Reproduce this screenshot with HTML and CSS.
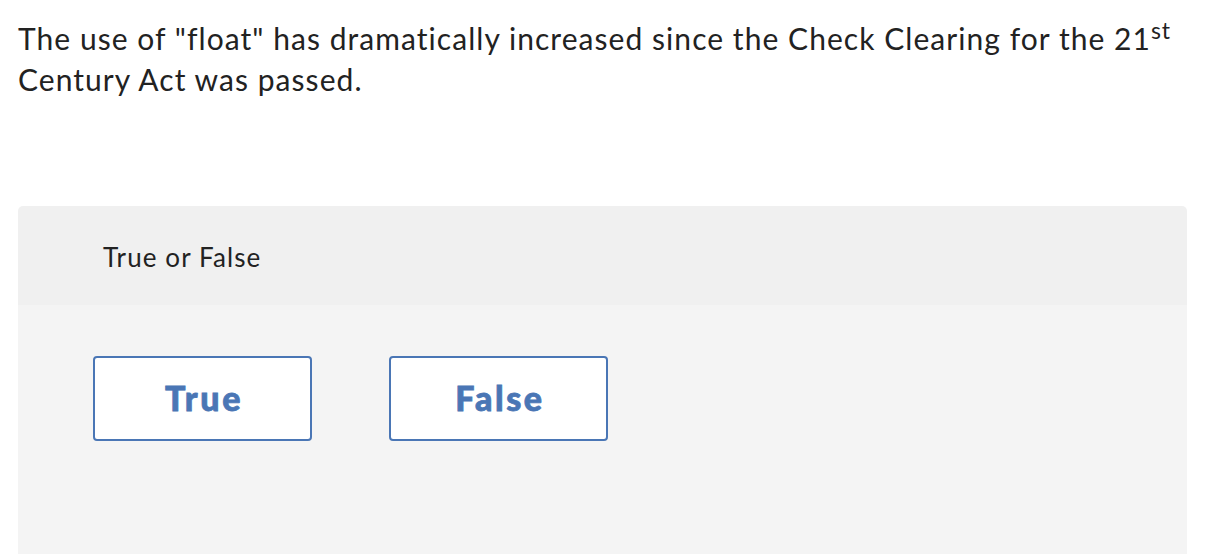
FILE: index.html
```html
<!DOCTYPE html>
<html>
<head>
<meta charset="utf-8">
<link rel="stylesheet" href="styles.css">
</head>
<body>
<div class="page">
  <p class="prompt">The use of "float" has dramatically increased since the Check Clearing for the 21<sup>st</sup> Century Act was passed.</p>
  <section class="card">
    <div class="card-head">True or False</div>
    <div class="card-body">
      <button class="choice">True</button>
      <button class="choice">False</button>
    </div>
  </section>
</div>
</body>
</html>
```
FILE: styles.css
```css
html, body {
  margin: 0;
  padding: 0;
  background: #ffffff;
}
.page {
  padding: 18px 33px 0 18px;
  font-family: Lato, "Noto Sans", sans-serif;
  color: #222222;
}
.prompt {
  margin: 0;
  font-size: 30px;
  line-height: 41px;
  letter-spacing: 1.05px;
}
.prompt sup {
  font-size: 23px;
  line-height: 0;
  vertical-align: 0.5em;
  letter-spacing: 0.8px;
}
.card {
  margin-top: 106px;
  border-radius: 5px 5px 0 0;
  overflow: hidden;
}
.card-head {
  background: #f0f0f0;
  height: 99px;
  box-sizing: border-box;
  padding: 36px 0 0 85px;
  font-size: 26px;
  line-height: 30px;
  letter-spacing: 1.1px;
}
.card-body {
  background: #f4f4f4;
  height: 260px;
  box-sizing: border-box;
  padding: 51px 0 0 75px;
  display: flex;
  gap: 77px;
  align-items: flex-start;
}
.choice {
  width: 219px;
  height: 85px;
  background: #ffffff;
  border: 2px solid #4a76b5;
  border-radius: 4px;
  font-family: Lato, "Noto Sans", sans-serif;
  font-weight: 900;
  font-size: 34px;
  letter-spacing: 2.6px;
  -webkit-text-stroke: 0.8px #4a76b5;
  color: #4a76b5;
  padding: 0 0 3px 3px;
}
```
